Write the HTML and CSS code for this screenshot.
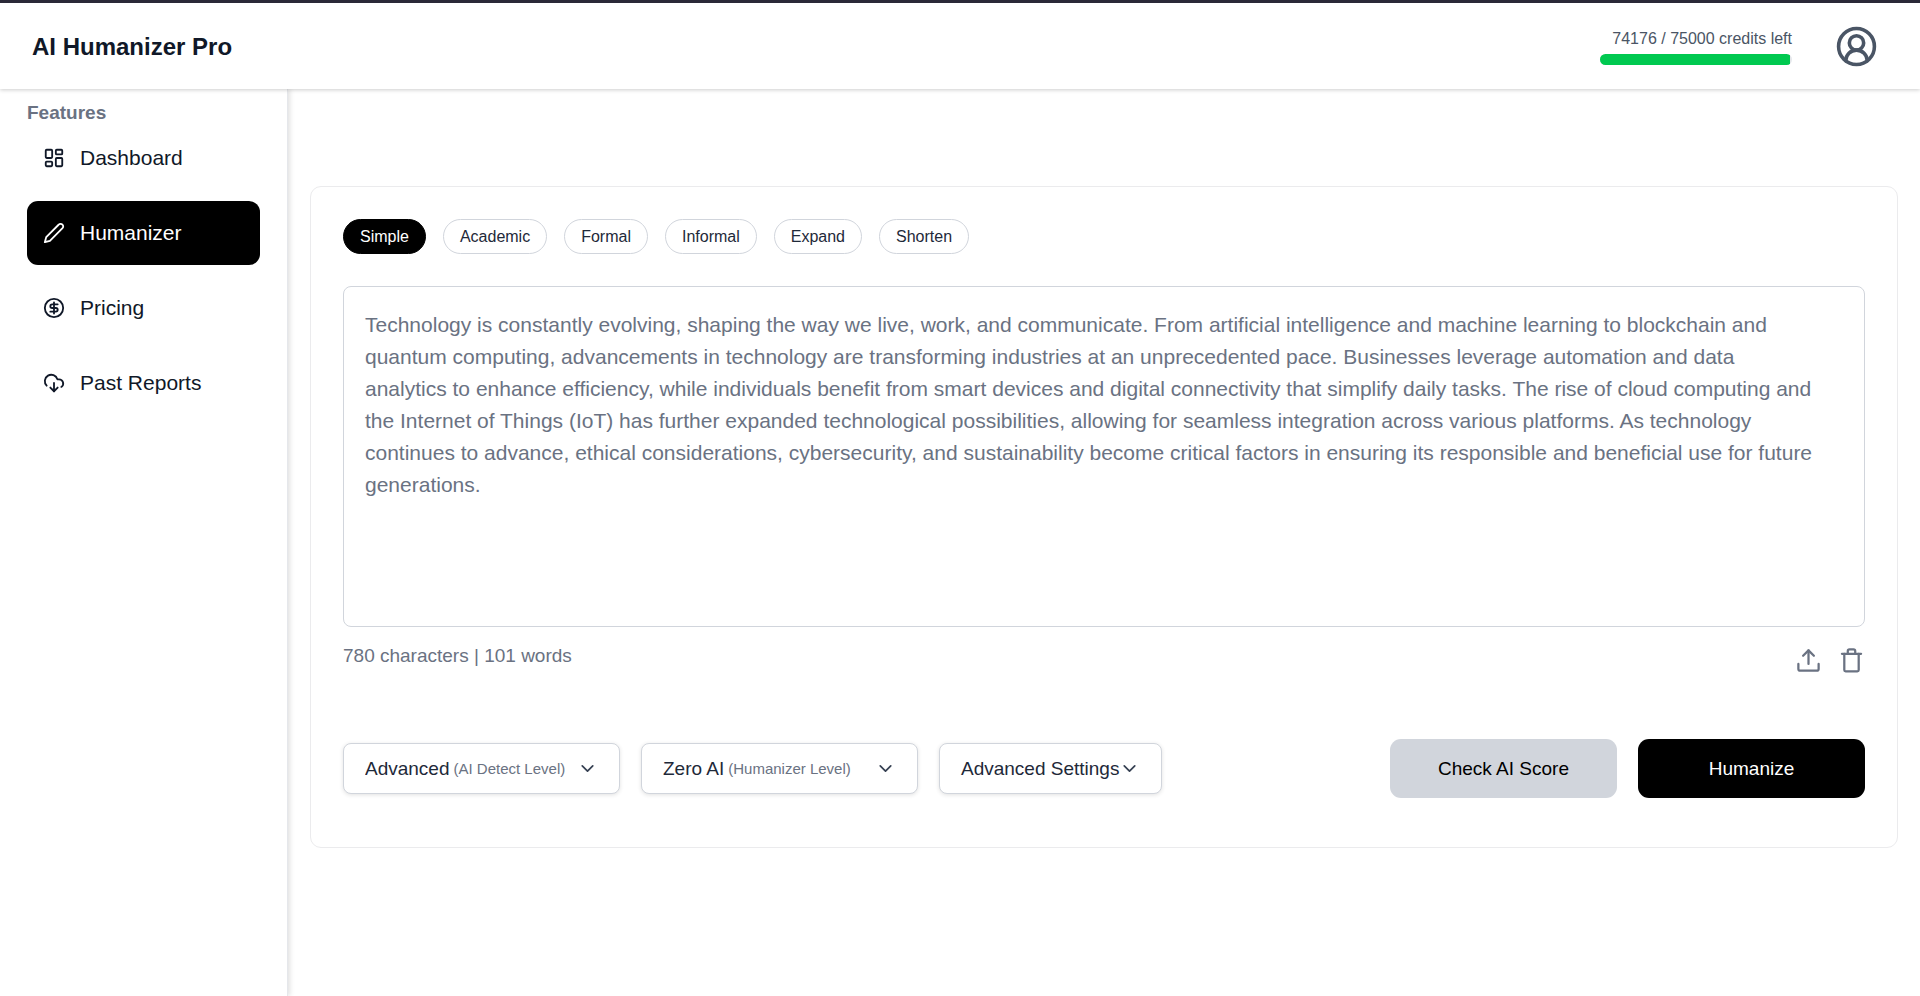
FILE: index.html
```html
<!DOCTYPE html>
<html lang="en">
<head>
    <meta charset="UTF-8">
    <meta name="viewport" content="width=device-width, initial-scale=1.0">
    <title>AI Humanizer Pro</title>
    <link rel="stylesheet" href="styles.css">
</head>
<body>
    <header class="header">
        <h1 class="brand">AI Humanizer Pro</h1>
        <div class="account">
            <div class="credits">
                <span class="credits-text">74176 / 75000 credits left</span>
                <div class="credits-bar">
                    <div class="credits-fill" style="width: 98.9%"></div>
                </div>
            </div>
            <button type="button" class="avatar-btn" aria-label="Account">
                <svg class="icon" viewBox="0 0 24 24">
                    <path d="M18 20a6 6 0 0 0-12 0" />
                    <circle cx="12" cy="10" r="4" />
                    <circle cx="12" cy="12" r="10" />
                </svg>
            </button>
        </div>
    </header>

    <div class="layout">
        <aside class="sidebar">
            <h2 class="sidebar-title">Features</h2>
            <nav class="nav">
                <a href="#dashboard" class="nav-link">
                    <svg class="icon" viewBox="0 0 24 24">
                        <rect x="3" y="3" width="7" height="9" rx="1" />
                        <rect x="14" y="3" width="7" height="5" rx="1" />
                        <rect x="14" y="12" width="7" height="9" rx="1" />
                        <rect x="3" y="16" width="7" height="5" rx="1" />
                    </svg>
                    Dashboard
                </a>
                <a href="#humanizer" class="nav-link active">
                    <svg class="icon" viewBox="0 0 24 24">
                        <path d="M17 3a2.85 2.83 0 1 1 4 4L7.5 20.5 2 22l1.5-5.5Z" />
                    </svg>
                    Humanizer
                </a>
                <a href="#pricing" class="nav-link">
                    <svg class="icon" viewBox="0 0 24 24">
                        <circle cx="12" cy="12" r="10" />
                        <path d="M16 8h-6a2 2 0 1 0 0 4h4a2 2 0 1 1 0 4H8" />
                        <path d="M12 18V6" />
                    </svg>
                    Pricing
                </a>
                <a href="#reports" class="nav-link">
                    <svg class="icon" viewBox="0 0 24 24">
                        <path d="M4 14.899A7 7 0 1 1 15.71 8h1.79a4.5 4.5 0 0 1 2.5 8.242" />
                        <path d="M12 12v9" />
                        <path d="m8 17 4 4 4-4" />
                    </svg>
                    Past Reports
                </a>
            </nav>
        </aside>

        <main class="main">
            <section class="card">
                <!-- Writing modes -->
                <div class="modes">
                    <button type="button" class="mode active">Simple</button>
                    <button type="button" class="mode">Academic</button>
                    <button type="button" class="mode">Formal</button>
                    <button type="button" class="mode">Informal</button>
                    <button type="button" class="mode">Expand</button>
                    <button type="button" class="mode">Shorten</button>
                </div>

                <textarea class="editor" aria-label="Text to humanize" spellcheck="false">Technology is constantly evolving, shaping the way we live, work, and communicate. From artificial intelligence and machine learning to blockchain and quantum computing, advancements in technology are transforming industries at an unprecedented pace. Businesses leverage automation and data analytics to enhance efficiency, while individuals benefit from smart devices and digital connectivity that simplify daily tasks. The rise of cloud computing and the Internet of Things (IoT) has further expanded technological possibilities, allowing for seamless integration across various platforms. As technology continues to advance, ethical considerations, cybersecurity, and sustainability become critical factors in ensuring its responsible and beneficial use for future generations.</textarea>

                <div class="editor-info">
                    <p class="counts">780 characters | 101 words</p>
                    <div class="editor-tools">
                        <button type="button" class="tool-btn" aria-label="Upload file">
                            <svg class="icon" viewBox="0 0 24 24">
                                <path d="M3 15v4.5A1.5 1.5 0 0 0 4.500 21h15a1.5 1.5 0 0 0 1.500-1.500V15" />
                                <path d="M12 15V3" />
                                <path d="m7.200 7.800 4.800-4.800 4.800 4.800" />
                            </svg>
                        </button>
                        <button type="button" class="tool-btn" aria-label="Clear text">
                            <svg class="icon" viewBox="0 0 24 24">
                                <path d="M3.500 6h17" />
                                <path d="M5.600 6v14.500a1.200 1.200 0 0 0 1.200 1.200h10.400a1.200 1.200 0 0 0 1.200-1.200V6" />
                                <path d="M8.700 6V3.500A1.500 1.500 0 0 1 10.200 2h3.600a1.500 1.500 0 0 1 1.500 1.500V6" />
                            </svg>
                        </button>
                    </div>
                </div>

                <div class="actions">
                    <div class="options">
                        <label class="option option-wide">
                            <select class="option-select" name="detect-level">
                                <option>Advanced</option>
                            </select>
                            <span class="option-hint">(AI Detect Level)</span>
                            <svg class="icon chevron" viewBox="0 0 24 24"><path d="m6 9 6 6 6-6" /></svg>
                        </label>
                        <label class="option option-wide">
                            <select class="option-select" name="humanizer-level">
                                <option>Zero AI</option>
                            </select>
                            <span class="option-hint">(Humanizer Level)</span>
                            <svg class="icon chevron" viewBox="0 0 24 24"><path d="m6 9 6 6 6-6" /></svg>
                        </label>
                        <button type="button" class="option">
                            Advanced Settings
                            <svg class="icon chevron" viewBox="0 0 24 24"><path d="m6 9 6 6 6-6" /></svg>
                        </button>
                    </div>
                    <div class="submit">
                        <button type="button" class="btn btn-light">Check AI Score</button>
                        <button type="button" class="btn btn-dark">Humanize</button>
                    </div>
                </div>
            </section>
        </main>
    </div>
</body>
</html>
```
FILE: styles.css
```css
* {
    box-sizing: border-box;
}

body {
    margin: 0;
    min-height: 100vh;
    display: flex;
    flex-direction: column;
    background: #fff;
    color: #101828;
    font-family: "Liberation Sans", Arial, sans-serif;
}

h1,
h2,
p {
    margin: 0;
}

button,
select,
textarea {
    font-family: inherit;
    color: inherit;
}

button {
    cursor: pointer;
}

.icon {
    flex: none;
    display: block;
    width: 22px;
    height: 22px;
    fill: none;
    stroke: currentColor;
    stroke-width: 2;
    stroke-linecap: round;
    stroke-linejoin: round;
}

/* Header */
.header {
    position: relative;
    z-index: 1;
    display: flex;
    align-items: center;
    justify-content: space-between;
    padding: 22px 42px 21px 32px;
    border-top: 3px solid #2a2938;
    background: #fff;
    box-shadow: 0 1px 4px rgba(0, 0, 0, 0.2);
}

.brand {
    font-size: 24px;
    line-height: 32px;
}

.account {
    display: flex;
    align-items: center;
    gap: 43px;
}

.credits {
    width: 192px;
    display: flex;
    flex-direction: column;
    align-items: flex-end;
    gap: 5px;
}

.credits-text {
    color: #4a5565;
    font-size: 16px;
    line-height: 21px;
}

.credits-bar {
    width: 100%;
    height: 11px;
    border-radius: 6px;
    background: #e5e7eb;
    overflow: hidden;
}

.credits-fill {
    height: 100%;
    background: #00c950;
}

.avatar-btn,
.tool-btn {
    padding: 0;
    border: none;
    background: none;
}

.avatar-btn {
    color: #4a5565;
}

.avatar-btn .icon {
    width: 43px;
    height: 43px;
}

/* Sidebar */
.layout {
    flex: 1;
    display: flex;
}

.sidebar {
    flex: none;
    width: 288px;
    padding: 11px 27px;
    border-right: 1px solid #e5e7eb;
    box-shadow: 2px 0 5px rgba(0, 0, 0, 0.12);
}

.sidebar-title {
    color: #6a7282;
    font-size: 19px;
    line-height: 26px;
}

.nav {
    display: flex;
    flex-direction: column;
    gap: 11px;
}

.nav-link {
    display: flex;
    align-items: center;
    gap: 15px;
    padding: 16px;
    border-radius: 11px;
    color: #101828;
    font-size: 21px;
    line-height: 32px;
    text-decoration: none;
}

.nav-link.active {
    background: #000;
    color: #fff;
}

/* Humanizer card */
.main {
    flex: 1;
    min-width: 0;
    padding: 97px 22px 32px;
}

.card {
    padding: 32px 32px 49px;
    border: 1px solid #ebebed;
    border-radius: 11px;
}

.modes {
    display: flex;
    flex-wrap: wrap;
    gap: 17px;
}

.mode {
    padding: 6px 16px;
    border: 1px solid #d1d5dc;
    border-radius: 18px;
    background: #fff;
    color: #1e2939;
    font-size: 16px;
    line-height: 21px;
}

.mode.active {
    border-color: #000;
    background: #000;
    color: #fff;
}

.editor {
    display: block;
    width: 100%;
    height: 341px;
    margin-top: 32px;
    padding: 22px 44px 21px 21px;
    border: 1px solid #d1d5dc;
    border-radius: 8px;
    background: #fff;
    color: #6a7282;
    font-size: 21px;
    line-height: 32px;
    resize: none;
    outline: none;
}

.editor-info {
    display: flex;
    align-items: flex-start;
    justify-content: space-between;
    margin-top: 16px;
    color: #6a7282;
}

.counts {
    font-size: 19px;
    line-height: 26px;
}

.editor-tools {
    display: flex;
    gap: 16px;
    padding-top: 4px;
}

.tool-btn .icon {
    width: 27px;
    height: 27px;
}

.actions {
    display: flex;
    align-items: center;
    justify-content: space-between;
    margin-top: 65px;
}

.options,
.submit {
    display: flex;
    gap: 21px;
}

.option {
    display: flex;
    align-items: center;
    height: 51px;
    padding: 0 21px;
    border: 1px solid #d1d5dc;
    border-radius: 8px;
    background: #fff;
    box-shadow: 0 1px 4px rgba(0, 0, 0, 0.12);
    color: #1e2939;
    font-size: 19px;
    cursor: pointer;
}

.option-wide {
    width: 277px;
}

.option-select {
    appearance: none;
    field-sizing: content;
    padding: 0;
    border: none;
    background: none;
    font-size: 19px;
    cursor: pointer;
}

.option-hint {
    margin-left: 4px;
    color: #6a7282;
    font-size: 15px;
}

.chevron {
    width: 21px;
    height: 21px;
    margin-left: auto;
    color: #364153;
}

.btn {
    width: 227px;
    height: 59px;
    border: none;
    border-radius: 11px;
    font-size: 19px;
}

.btn-light {
    background: #d1d5dc;
    color: #000;
}

.btn-dark {
    background: #000;
    color: #fff;
}
```
